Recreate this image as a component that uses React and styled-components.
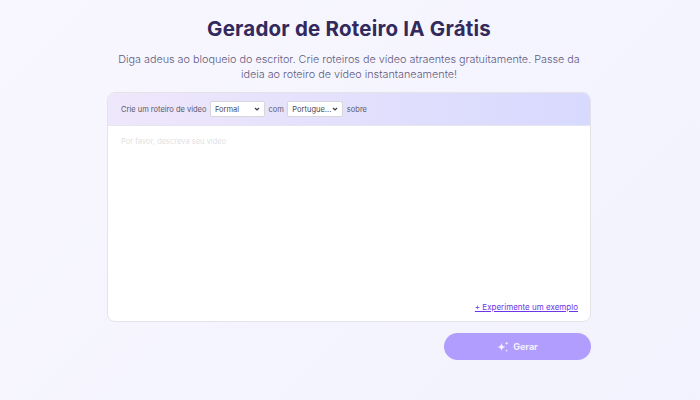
import React from 'react'
import styled, { createGlobalStyle } from 'styled-components'

const Global = createGlobalStyle`
  html, body { margin: 0; padding: 0; }
  body {
    width: 700px;
    height: 400px;
    overflow: hidden;
    font-family: 'Inter', 'Open Sans', sans-serif;
    background: linear-gradient(135deg, #f8f7ff 0%, #f2f2fe 100%);
  }
`
const Page = styled.main`
  width: 484px;
  margin-left: 107px;
  padding-top: 17px;
  display: flex;
  flex-direction: column;
`
const Title = styled.h1`
  margin: 0;
  font-size: 20.5px;
  line-height: 24px;
  font-weight: 700;
  color: #322a5c;
  text-align: center;
  letter-spacing: 0.2px;
`
const Subtitle = styled.p`
  margin: 11px 0 0;
  font-size: 10.8px;
  line-height: 15px;
  font-weight: 300;
  color: #5f5a80;
  text-align: center;
`
const Card = styled.section`
  margin-top: 10px;
  height: 230px;
  box-sizing: border-box;
  border: 1px solid #e3e3e8;
  border-radius: 8px;
  background: #fff;
  overflow: hidden;
  display: flex;
  flex-direction: column;
`
const Toolbar = styled.div`
  height: 33px;
  box-sizing: border-box;
  padding: 0 13px;
  display: flex;
  align-items: center;
  gap: 3.5px;
  background: linear-gradient(90deg, #efe7fb 0%, #d7d9fe 100%);
  border-bottom: 1px solid #e6e6ee;
`
const Label = styled.span`
  font-size: 7.5px;
  color: #5b5868;
  white-space: nowrap;
`
const Select = styled.div`
  width: ${p => p.$width}px;
  height: 16px;
  box-sizing: border-box;
  padding: 0 4px;
  display: flex;
  align-items: center;
  justify-content: space-between;
  background: #fff;
  border: 1px solid #d6d6dc;
  border-radius: 2px;
  font-size: 7.5px;
  color: #4a4858;
`
const Body = styled.div`
  flex: 1;
  padding: 11px 12px 9px 13px;
  display: flex;
  flex-direction: column;
  justify-content: space-between;
`
const Placeholder = styled.span`
  font-size: 7.5px;
  color: #dfdfe4;
`
const Example = styled.a`
  align-self: flex-end;
  font-size: 8px;
  color: #6b35e8;
  text-decoration: underline;
`
const Actions = styled.div`
  margin-top: 11px;
  display: flex;
  justify-content: flex-end;
`
const Generate = styled.button`
  width: 147px;
  height: 27px;
  border: 0;
  border-radius: 14px;
  background: #b19dfe;
  color: #f3f0ff;
  font-family: inherit;
  font-size: 9px;
  font-weight: 700;
  display: flex;
  align-items: center;
  justify-content: center;
  gap: 4px;
`

const Chevron = () => (
  <svg width="6" height="4" viewBox="0 0 6 4" fill="none">
    <path d="M1 1l2 2 2-2" stroke="#3d3a50" strokeWidth="1.2" />
  </svg>
)

const Sparkle = () => (
  <svg width="12" height="12" viewBox="0 0 12 12" fill="#f3f0ff">
    <path d="M4.5 1.8C4.9 4.4 5.9 5.5 8.6 6 5.9 6.500 4.900 7.600 4.500 10.200 4.100 7.600 3.100 6.500.4 6 3.100 5.500 4.100 4.400 4.500 1.800z" />
    <path d="M9.700.4l.5 1.300 1.300.5-1.300.5-.5 1.300-.5-1.300-1.300-.5 1.300-.5z" />
    <path d="M9.700 8.200l.4 1 1 .4-1 .4-.4 1-.4-1-1-.4 1-.4z" />
  </svg>
)

export default function App() {
  return (
    <Page>
      <Global />
      <Title>Gerador de Roteiro IA Grátis</Title>
      <Subtitle>
        Diga adeus ao bloqueio do escritor. Crie roteiros de vídeo atraentes gratuitamente. Passe da
        <br />
        ideia ao roteiro de vídeo instantaneamente!
      </Subtitle>
      <Card>
        <Toolbar>
          <Label>Crie um roteiro de vídeo</Label>
          <Select $width={55}>Formal <Chevron /></Select>
          <Label>com</Label>
          <Select $width={56}>Portugue... <Chevron /></Select>
          <Label>sobre</Label>
        </Toolbar>
        <Body>
          <Placeholder>Por favor, descreva seu vídeo</Placeholder>
          <Example>+ Experimente um exemplo</Example>
        </Body>
      </Card>
      <Actions>
        <Generate><Sparkle /> Gerar</Generate>
      </Actions>
    </Page>
  )
}
